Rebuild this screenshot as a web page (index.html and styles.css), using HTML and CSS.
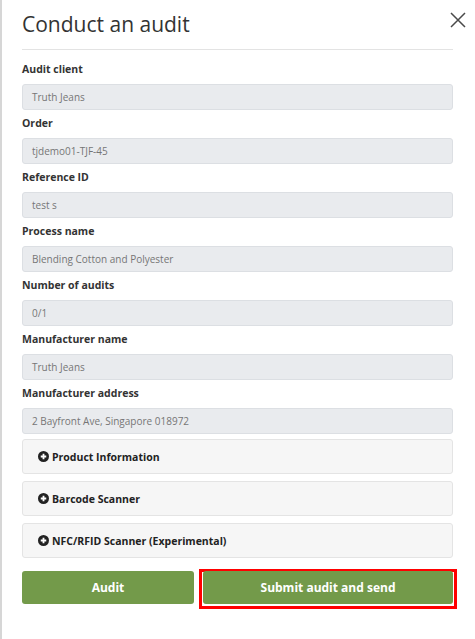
FILE: index.html
```html
<!DOCTYPE html>
<html>
<head>
<meta charset="utf-8">
<link rel="stylesheet" href="styles.css">
</head>
<body>
<div class="modal">
  <div class="modal-header">
    <h1 class="modal-title">Conduct an audit</h1>
    <button class="close" aria-label="Close">
      <svg width="16" height="16" viewBox="0 0 16 16"><path d="M1 1L15 15M15 1L1 15" stroke="#4a4a4a" stroke-width="1.5" fill="none"/></svg>
    </button>
  </div>
  <form class="form">
    <div class="field"><label>Audit client</label><div class="input">Truth Jeans</div></div>
    <div class="field"><label>Order</label><div class="input">tjdemo01-TJF-45</div></div>
    <div class="field"><label>Reference ID</label><div class="input">test s</div></div>
    <div class="field"><label>Process name</label><div class="input">Blending Cotton and Polyester</div></div>
    <div class="field"><label>Number of audits</label><div class="input">0/1</div></div>
    <div class="field"><label>Manufacturer name</label><div class="input">Truth Jeans</div></div>
    <div class="field"><label>Manufacturer address</label><div class="input">2 Bayfront Ave, Singapore 018972</div></div>
    <div class="panels">
      <div class="panel"><span class="plus"><svg width="11" height="11" viewBox="0 0 12 12"><circle cx="6" cy="6" r="6" fill="#222"/><path d="M6 3v6M3 6h6" stroke="#fff" stroke-width="2"/></svg></span>Product Information</div>
      <div class="panel"><span class="plus"><svg width="11" height="11" viewBox="0 0 12 12"><circle cx="6" cy="6" r="6" fill="#222"/><path d="M6 3v6M3 6h6" stroke="#fff" stroke-width="2"/></svg></span>Barcode Scanner</div>
      <div class="panel"><span class="plus"><svg width="11" height="11" viewBox="0 0 12 12"><circle cx="6" cy="6" r="6" fill="#222"/><path d="M6 3v6M3 6h6" stroke="#fff" stroke-width="2"/></svg></span>NFC/RFID Scanner (Experimental)</div>
    </div>
    <div class="actions">
      <button type="button" class="btn btn-audit">Audit</button>
      <div class="highlight">
        <button type="button" class="btn btn-submit">Submit audit and send</button>
      </div>
    </div>
  </form>
</div>
</body>
</html>
```
FILE: styles.css
```css
html, body {
  margin: 0;
  padding: 0;
  background: #fff;
}
body {
  font-family: "Open Sans", "Noto Sans", sans-serif;
  color: #333;
}
.modal {
  border-left: 2px solid #d6d6d6;
  min-height: 639px;
  box-sizing: border-box;
  padding: 0 22px 0 20px;
}
.modal-header {
  display: flex;
  justify-content: space-between;
  align-items: flex-start;
  border-bottom: 1px solid #e3e3e3;
  padding-top: 10px;
  height: 39px;
}
.modal-title {
  margin: 0;
  font-size: 21px;
  font-weight: 400;
  line-height: 28px;
  color: #333;
}
.close {
  border: 0;
  background: none;
  padding: 0;
  margin: 2px -13px 0 0;
  width: 16px;
  height: 16px;
  display: flex;
}
.form {
  padding-top: 11px;
}
.field {
  margin-bottom: 5px;
}
.field label {
  display: block;
  font-size: 10.5px;
  font-weight: 700;
  line-height: 16px;
  color: #333;
  margin-bottom: 7px;
}
.input {
  height: 26px;
  box-sizing: border-box;
  background: #e9ebee;
  border: 1px solid #dcdfe3;
  border-radius: 3px;
  padding: 0 9px;
  font-size: 10px;
  line-height: 24px;
  color: #767676;
}
.panels {
  display: flex;
  flex-direction: column;
  gap: 7px;
  margin-top: 3px;
}
.panel {
  height: 35px;
  box-sizing: border-box;
  background: #f6f6f6;
  border: 1px solid #e4e4e4;
  border-radius: 3px;
  display: flex;
  align-items: center;
  padding-left: 15px;
  font-size: 10.5px;
  font-weight: 700;
  color: #222;
}
.plus {
  display: flex;
  margin-right: 3px;
}
.actions {
  display: flex;
  align-items: flex-start;
  gap: 5px;
  margin-top: 13px;
}
.btn {
  height: 33px;
  border: 0;
  border-radius: 3px;
  background: #739a4a;
  color: #fff;
  font-family: "Open Sans", "Noto Sans", sans-serif;
  font-size: 12px;
  font-weight: 700;
  padding: 0;
}
.btn-audit {
  width: 172px;
}
.highlight {
  flex: 1;
  display: flex;
  border: 3px solid #ff0000;
  padding: 0 1px 2px 1px;
  margin: -2px -4px 0 0;
}
.btn-submit {
  flex: 1;
  margin-top: -1px;
}
```
